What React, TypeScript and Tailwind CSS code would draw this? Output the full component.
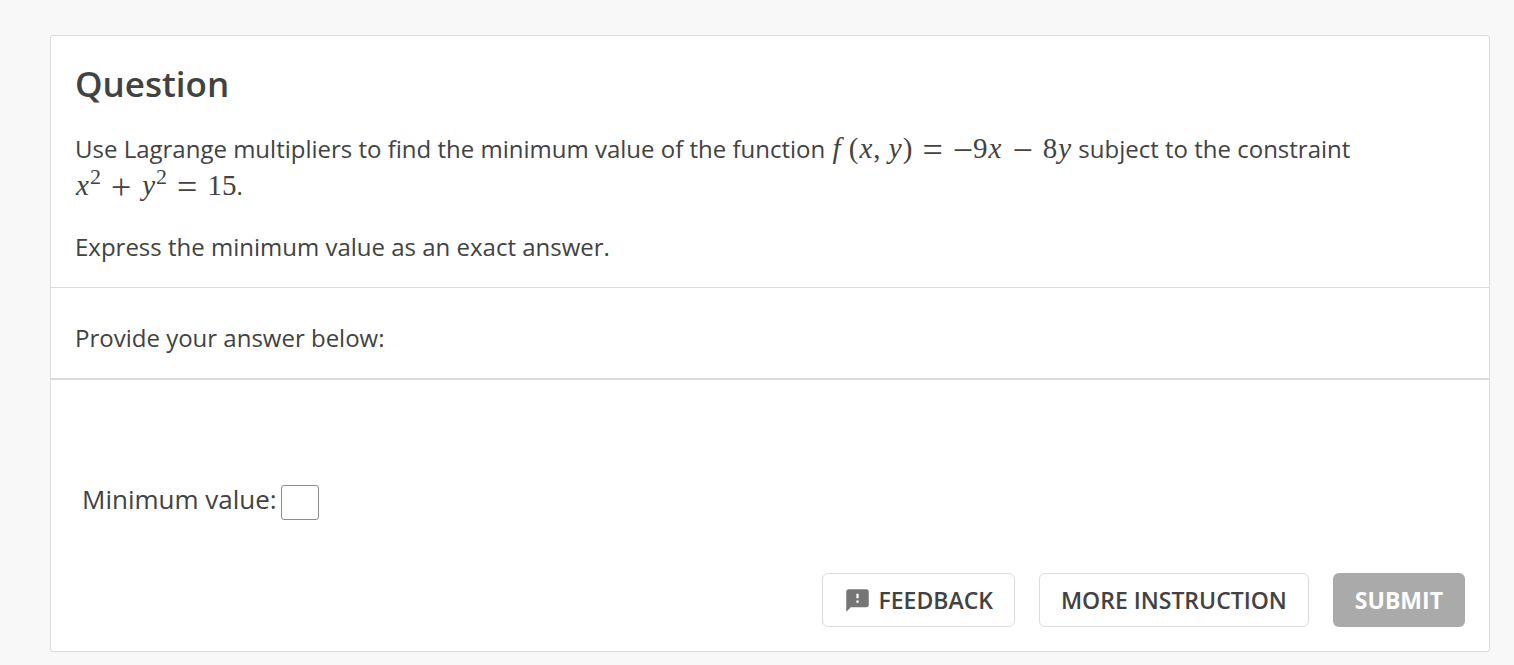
import React, { useState } from 'react';

const Var: React.FC<{ children: React.ReactNode }> = ({ children }) => (
  <i className="italic mx-px">{children}</i>
);

const Minus: React.FC = () => <span className="text-[36px] leading-none align-[-4px]">−</span>;

// Binary operators and relations get wide margins, as in typeset math
const Op: React.FC<{ children: React.ReactNode }> = ({ children }) => (
  <span className="mx-2.5 text-[36px] leading-none align-[-4px]">{children}</span>
);

const Sup: React.FC<{ children: React.ReactNode }> = ({ children }) => (
  <sup className="text-[22px] leading-none">{children}</sup>
);

const Formula: React.FC<{ children: React.ReactNode }> = ({ children }) => (
  <span className="font-['Liberation_Serif',serif] text-[29px] leading-none whitespace-nowrap">
    {children}
  </span>
);

const FeedbackIcon: React.FC = () => (
  <svg viewBox="0 0 24 24" className="w-[27px] h-[27px] fill-[#757575]" aria-hidden="true">
    <path d="M20 2H4c-1.1 0-1.99.9-1.99 2L2 22l4-4h14c1.1 0 2-.9 2-2V4c0-1.1-.9-2-2-2zm-7 12h-2v-2h2v2zm0-4h-2V6h2v4z" />
  </svg>
);

const App: React.FC = () => {
  const [answer, setAnswer] = useState('');

  return (
    <div className="min-h-screen bg-[#f8f8f8] pt-[35px] pb-3 pl-[50px] pr-6 font-['Open_Sans',sans-serif] text-2xl text-[#424242]">
      <main className="bg-white border border-[#dcdcdc] rounded-[3px]">
        <section className="px-6 pt-6 pb-[22px] border-b border-[#dcdcdc]">
          <h1 className="text-[35px] leading-12 font-semibold">Question</h1>
          <p className="mt-[23px] leading-9">
            Use Lagrange multipliers to find the minimum value of the function{' '}
            <Formula>
              <Var>f</Var> (<Var>x</Var>, <Var>y</Var>)<Op>=</Op><Minus />9<Var>x</Var>
              <Op>−</Op>8<Var>y</Var>
            </Formula>{' '}
            subject to the constraint{' '}
            <Formula>
              <Var>x</Var><Sup>2</Sup><Op>+</Op><Var>y</Var><Sup>2</Sup><Op>=</Op>15
            </Formula>
            .
          </p>
          <p className="mt-6 leading-9">Express the minimum value as an exact answer.</p>
        </section>

        <section className="px-6 pt-8 pb-[22px] border-b-2 border-[#dcdcdc]">
          <h2 className="leading-9">Provide your answer below:</h2>
        </section>

        <form className="px-6 pt-[105px] pb-6" onSubmit={(e) => e.preventDefault()}>
          <div className="flex items-start gap-1 pl-[7px] text-[26px] leading-[28px]">
            <label htmlFor="minimum-value">Minimum value:</label>
            <input
              id="minimum-value"
              type="text"
              value={answer}
              onChange={(e) => setAnswer(e.target.value)}
              className="w-[38px] h-[35px] px-1 bg-white border border-[#8c8c8c] rounded-[3px] text-2xl outline-none"
            />
          </div>

          <div className="mt-[53px] flex flex-wrap justify-end gap-6 text-[23px] leading-[28px] font-semibold">
            <button type="button" className="flex items-center gap-2 h-[54px] px-[21px] border border-[#dcdcdc] rounded-md">
              <FeedbackIcon />
              FEEDBACK
            </button>
            <button type="button" className="h-[54px] px-[21px] border border-[#dcdcdc] rounded-md">
              MORE INSTRUCTION
            </button>
            <button type="submit" className="h-[54px] px-[22px] bg-[#aaaaaa] rounded-md font-bold text-white">
              SUBMIT
            </button>
          </div>
        </form>
      </main>
    </div>
  );
};

export default App;
